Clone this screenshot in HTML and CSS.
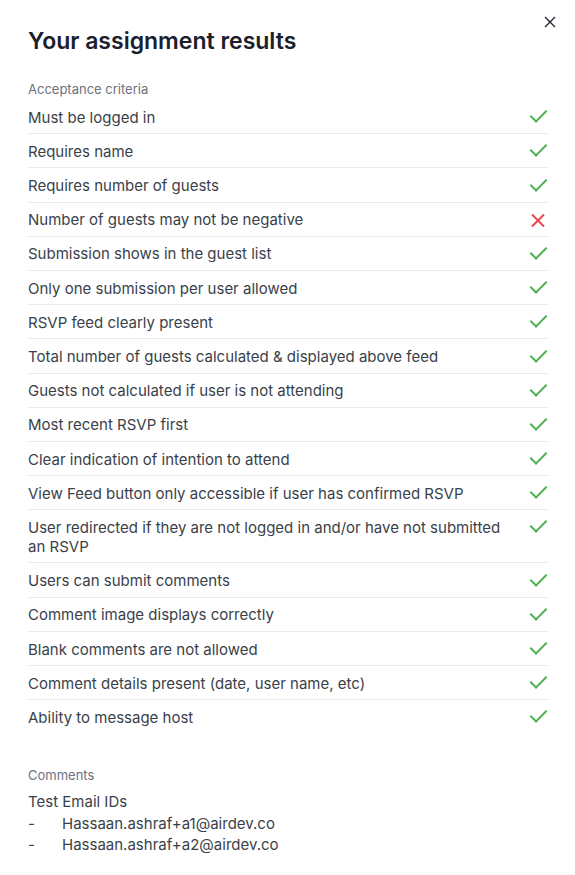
FILE: index.html
```html
<!DOCTYPE html>
<html>
<head>
<meta charset="utf-8">
<link rel="stylesheet" href="styles.css">
</head>
<body>
<div class="modal">
  <button class="close" aria-label="Close">
    <svg width="12" height="12" viewBox="0 0 12 12"><path d="M1 1L11 11M11 1L1 11" stroke="#1a202c" stroke-width="1.3" fill="none"/></svg>
  </button>
  <h1 class="title">Your assignment results</h1>
  <div class="label">Acceptance criteria</div>
  <ul class="list">
    <li class="row"><span>Must be logged in</span><i class="ok"></i></li>
    <li class="row"><span>Requires name</span><i class="ok"></i></li>
    <li class="row"><span>Requires number of guests</span><i class="ok"></i></li>
    <li class="row"><span>Number of guests may not be negative</span><i class="bad"></i></li>
    <li class="row"><span>Submission shows in the guest list</span><i class="ok"></i></li>
    <li class="row"><span>Only one submission per user allowed</span><i class="ok"></i></li>
    <li class="row"><span>RSVP feed clearly present</span><i class="ok"></i></li>
    <li class="row"><span>Total number of guests calculated &amp; displayed above feed</span><i class="ok"></i></li>
    <li class="row"><span>Guests not calculated if user is not attending</span><i class="ok"></i></li>
    <li class="row"><span>Most recent RSVP first</span><i class="ok"></i></li>
    <li class="row"><span>Clear indication of intention to attend</span><i class="ok"></i></li>
    <li class="row"><span>View Feed button only accessible if user has confirmed RSVP</span><i class="ok"></i></li>
    <li class="row"><span>User redirected if they are not logged in and/or have not submitted an RSVP</span><i class="ok"></i></li>
    <li class="row"><span>Users can submit comments</span><i class="ok"></i></li>
    <li class="row"><span>Comment image displays correctly</span><i class="ok"></i></li>
    <li class="row"><span>Blank comments are not allowed</span><i class="ok"></i></li>
    <li class="row"><span>Comment details present (date, user name, etc)</span><i class="ok"></i></li>
    <li class="row last"><span>Ability to message host</span><i class="ok"></i></li>
  </ul>
  <div class="label comments-label">Comments</div>
  <div class="comments">
    <div>Test Email IDs</div>
    <div class="email"><span class="dash">-</span><span>Hassaan.ashraf+a1@airdev.co</span></div>
    <div class="email"><span class="dash">-</span><span>Hassaan.ashraf+a2@airdev.co</span></div>
  </div>
</div>
</body>
</html>
```
FILE: styles.css
```css
* { box-sizing: border-box; }
html, body { margin: 0; padding: 0; background: #fff; }
body { font-family: Inter, "Noto Sans", sans-serif; color: #3a3f4a; }
.modal { position: relative; width: 575px; padding: 27px 27px 0 28px; }
.close {
  position: absolute; top: 16px; right: 19px;
  width: 12px; height: 12px; padding: 0; border: 0; background: none;
  display: flex; align-items: center; justify-content: center;
}
.close svg { display: block; }
.title {
  margin: 0; font-size: 23px; font-weight: 600; line-height: 28px;
  color: #1a202c;
}
.label { font-size: 13px; color: #6b7280; line-height: 18px; margin-top: 25px; margin-bottom: 2px; }
.list { list-style: none; margin: 0; padding: 0; }
.row {
  display: flex; justify-content: space-between; align-items: flex-start;
  padding: 7.7px 0 6.5px; line-height: 19px; font-size: 15px;
  border-bottom: 1px solid #e9ebee; color: #3a3f4a;
}
.row.last { border-bottom: 0; }
.row span { flex: 1; padding-right: 20px; }
.ok, .bad { flex: none; width: 20px; height: 19px; display: block; position: relative; }
.ok::after {
  content: ""; position: absolute;
  width: 7px; height: 14px;
  left: 6px; top: -1.5px;
  border-right: 2px solid #4caf50; border-bottom: 2px solid #4caf50;
  transform: rotate(45deg);
  transform-origin: center;
}
.bad::before, .bad::after {
  content: ""; position: absolute; left: 9px; top: 1.5px;
  width: 2px; height: 17px; background: #e5484d;
}
.bad::before { transform: rotate(45deg); }
.bad::after { transform: rotate(-45deg); }
.comments-label { margin-top: 33px; margin-bottom: 0; }
.comments { font-size: 15px; line-height: 21.5px; margin-top: 7px; color: #3a3f4a; }
.email { display: flex; }
.dash { width: 34px; }
```
